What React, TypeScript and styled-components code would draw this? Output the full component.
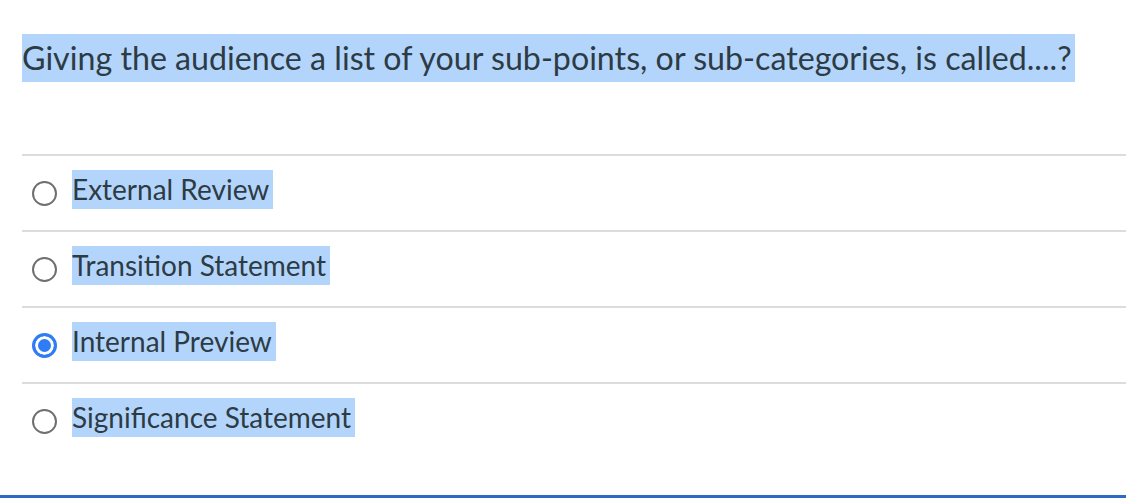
import styled, { createGlobalStyle } from 'styled-components';

const colors = {
  text: "#2d3b45",
  highlight: "#b4d5fb",
  divider: "#dcdcdc",
  blue: "#2e7cf6",
  bar: "#2b6bc7",
  radio: "#6f6f6f"
}

const GlobalStyle = createGlobalStyle`
  html, body {
    margin: 0;
    padding: 0;
    background: #fff;
  }
  body {
    font-family: Lato, "Open Sans", sans-serif;
    color: ${colors.text};
  }
`;

const Page = styled.div`
  height: 498px;
  box-sizing: border-box;
  border-bottom: 3px solid ${colors.bar};
  padding: 34px 0 0 22px;
  overflow: hidden;
`;

const Question = styled.div`
  font-size: 32.2px;
  line-height: 48px;
  height: 48px;
  margin-bottom: 72px;
  white-space: nowrap;

  span {
    display: inline-block;
    background: ${colors.highlight};
    padding-right: 3px;
  }
`;

const AnswerList = styled.div`
  display: flex;
  flex-direction: column;
`;

const Answer = styled.label`
  display: flex;
  align-items: flex-start;
  height: 76px;
  box-sizing: border-box;
  border-top: 2px solid ${colors.divider};
  padding: 14px 0 0 10px;
  gap: 15px;
`;

const Radio = styled.span<{ checked?: boolean }>`
  width: 25px;
  height: 25px;
  box-sizing: border-box;
  border-radius: 50%;
  flex-shrink: 0;
  border: ${p => (p.checked ? `3px solid ${colors.blue}` : `2px solid ${colors.radio}`)};
  background: ${p => (p.checked ? colors.blue : "#fff")};
  box-shadow: ${p => (p.checked ? "inset 0 0 0 3px #fff" : "none")};
  margin-top: 11px;
`;

const AnswerText = styled.span`
  font-size: 28px;
  line-height: 39px;
  background: ${colors.highlight};
  padding-right: 4px;
  white-space: nowrap;
`;

const answers = [
  { text: "External Review", checked: false },
  { text: "Transition Statement", checked: false },
  { text: "Internal Preview", checked: true },
  { text: "Significance Statement", checked: false },
];

const App = () => {
  return (
    <>
      <GlobalStyle />
      <Page>
        <Question>
          <span>Giving the audience a list of your sub-points, or sub-categories, is called....?</span>
        </Question>
        <AnswerList>
          {answers.map((a) => (
            <Answer key={a.text}>
              <Radio checked={a.checked} />
              <AnswerText>{a.text}</AnswerText>
            </Answer>
          ))}
        </AnswerList>
      </Page>
    </>
  );
};

export default App;
